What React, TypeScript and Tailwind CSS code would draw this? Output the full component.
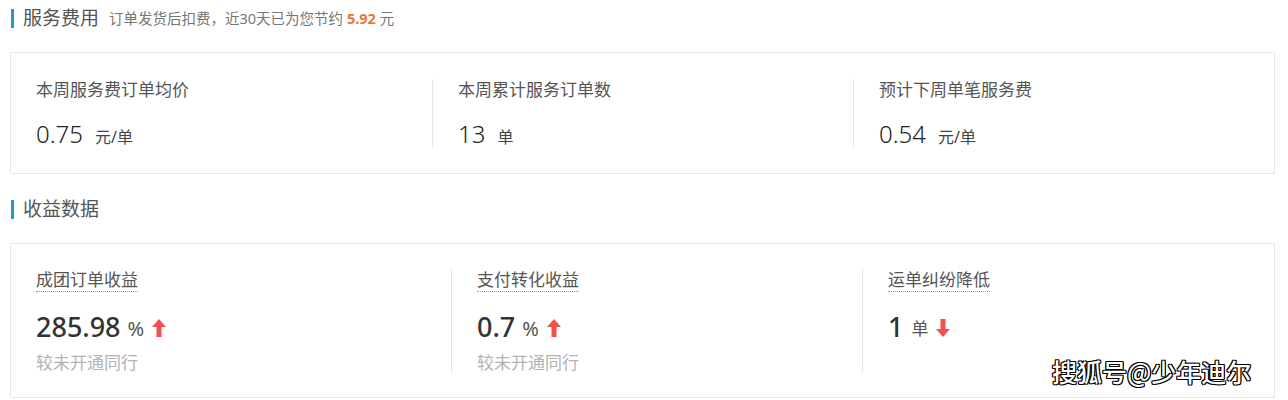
import React from 'react';

const FONT = 'font-["Noto_Sans","Noto_Sans_CJK_SC",sans-serif]';

function Arrow({ down = false }: { down?: boolean }) {
  return (
    <svg
      width="14"
      height="18"
      viewBox="0 0 14 18"
      className={down ? 'rotate-180' : ''}
      aria-hidden="true"
    >
      <path d="M7 0 L14 8 L9.5 8 L9.5 18 L4.5 18 L4.5 8 L0 8 Z" fill="#f0514e" />
    </svg>
  );
}

function SectionTitle({ title, children }: { title: string; children?: React.ReactNode }) {
  return (
    <div className="flex items-center h-[20px]">
      <span className="w-[3px] h-[19px] bg-[#2c93d8] ml-px" />
      <span className="ml-[9px] text-[19px] leading-[20px] text-[#555]">{title}</span>
      {children}
    </div>
  );
}

const feeStats = [
  { label: '本周服务费订单均价', value: '0.75', unit: '元/单' },
  { label: '本周累计服务订单数', value: '13', unit: '单' },
  { label: '预计下周单笔服务费', value: '0.54', unit: '元/单' },
];

const incomeStats = [
  { label: '成团订单收益', value: '285.98', unit: '%', down: false, unitBig: true, note: '较未开通同行' },
  { label: '支付转化收益', value: '0.7', unit: '%', down: false, unitBig: true, note: '较未开通同行' },
  { label: '运单纠纷降低', value: '1', unit: '单', down: true, unitBig: false, note: '' },
];

export default function App() {
  return (
    <div className={`relative w-[1288px] h-[400px] overflow-hidden bg-white ${FONT}`}>
      <div className="pl-[10px] pr-[13px] pt-[8px]">
        <SectionTitle title="服务费用">
          <span className="ml-[10px] text-[14.5px] leading-[20px] text-[#777]">
            订单发货后扣费，近30天已为您节约{' '}
            <span className="font-bold text-[#e8773a]">5.92</span> 元
          </span>
        </SectionTitle>

        <div className="mt-[24px] h-[122px] border border-[#e9e9e9] pt-[26px] grid grid-cols-3">
          {feeStats.map((s, i) => (
            <div
              key={s.label}
              className={`h-[68px] px-[25px] ${i > 0 ? 'border-l border-[#e6e6e6]' : ''}`}
            >
              <div className="text-[17px] leading-[22px] text-[#555]">{s.label}</div>
              <div className="mt-[18px] flex items-baseline leading-[30px]">
                <span className="text-[24px] font-light text-[#222]">{s.value}</span>
                <span className="ml-[12px] text-[16px] text-[#444]">{s.unit}</span>
              </div>
            </div>
          ))}
        </div>

        <div className="mt-[25px]">
          <SectionTitle title="收益数据" />
        </div>

        <div className="mt-[24px] h-[155px] border border-[#e9e9e9] pt-[24px] grid grid-cols-[440px_411px_1fr]">
          {incomeStats.map((s, i) => (
            <div
              key={s.label}
              className={`h-[105px] px-[25px] ${i > 0 ? 'border-l border-[#e6e6e6]' : ''}`}
            >
              <span className="inline-block text-[17px] leading-[22px] text-[#555] border-b border-dotted border-[#999]">
                {s.label}
              </span>
              <div className="mt-[19px] flex items-center h-[32px]">
                <span className="text-[27px] leading-[32px] font-medium text-[#333]">{s.value}</span>
                <span
                  className={
                    s.unitBig
                      ? 'ml-[7px] mt-[3px] text-[20px] text-[#555]'
                      : 'ml-[8px] mt-[4px] text-[17px] text-[#555]'
                  }
                >
                  {s.unit}
                </span>
                <span className="ml-[8px] mt-[2px] flex">
                  <Arrow down={s.down} />
                </span>
              </div>
              {s.note && (
                <div className="mt-[9px] text-[17px] leading-[22px] text-[#b3b3b3]">{s.note}</div>
              )}
            </div>
          ))}
        </div>
      </div>

      <div className="absolute left-[1052px] top-[356px] text-[25px] leading-[30px] font-medium text-white font-['Noto_Sans_CJK_SC',sans-serif] [text-shadow:1px_1px_0_#000,-1px_-1px_0_#000,1px_-1px_0_#000,-1px_1px_0_#000,1px_0_0_#000,-1px_0_0_#000]">
        搜狐号@少年迪尔
      </div>
    </div>
  );
}
